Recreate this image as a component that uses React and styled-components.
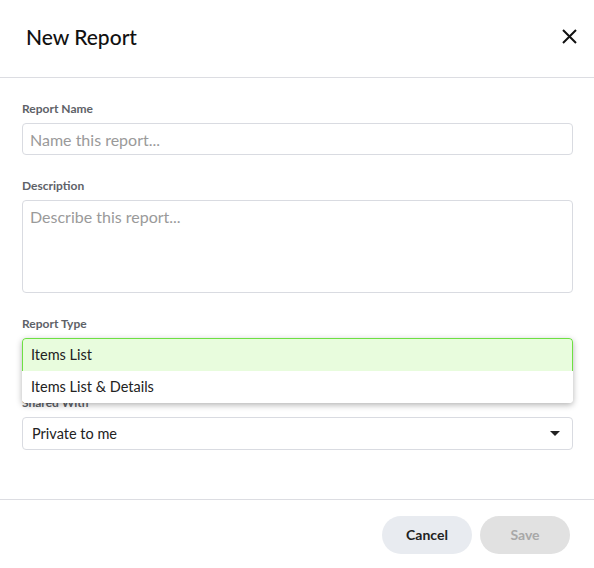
import React from 'react';
import styled, { createGlobalStyle } from 'styled-components';

const GlobalStyle = createGlobalStyle`
  html, body {
    margin: 0;
    padding: 0;
    background: #ffffff;
  }
  body {
    font-family: Lato, "Noto Sans", sans-serif;
    color: #1a1a1a;
  }
  * {
    box-sizing: border-box;
  }
`;

const Modal = styled.div`
  width: 594px;
  height: 568px;
  background: #fff;
  display: flex;
  flex-direction: column;
`;

const Header = styled.div`
  height: 78px;
  display: flex;
  align-items: center;
  justify-content: space-between;
  padding: 0 17px 4px 26px;
  border-bottom: 1px solid #dcdde2;
`;

const Title = styled.h2`
  margin: 0;
  font-size: 21px;
  font-weight: 500;
  color: #111;
`;

const CloseButton = styled.button`
  background: none;
  border: none;
  padding: 0;
  width: 15px;
  height: 15px;
  display: flex;
  align-items: center;
  justify-content: center;
  cursor: pointer;
  color: #111;
`;

const Body = styled.div`
  flex: 1;
  display: flex;
  flex-direction: column;
  padding: 23px 21px 0 22px;
  border-bottom: 1px solid #dcdde2;
`;

const Field = styled.div`
  display: flex;
  flex-direction: column;
  margin-bottom: ${props => props.gap || 23}px;
`;

const Label = styled.label`
  font-size: 12px;
  font-weight: 700;
  color: #5e6268;
  margin-bottom: 7px;
  line-height: 15px;
`;

const TextInput = styled.input`
  height: 32px;
  border: 1px solid #d9dbe1;
  border-radius: 4px;
  padding: 0 7px;
  font-family: inherit;
  font-size: 16px;
  color: #222;
  outline: none;

  &::placeholder {
    color: #9a9a9a;
  }
`;

const TextArea = styled.textarea`
  height: 93px;
  border: 1px solid #d9dbe1;
  border-radius: 4px;
  padding: 6px 7px;
  font-family: inherit;
  font-size: 16px;
  resize: none;
  outline: none;

  &::placeholder {
    color: #9a9a9a;
  }
`;

const SelectWrap = styled.div`
  position: relative;
`;

const SelectControl = styled.div`
  height: 33px;
  border: 1px solid #d9dbe1;
  border-radius: 4px;
  padding: 0 9px 1px;
  display: flex;
  align-items: center;
  justify-content: space-between;
  font-size: 14.5px;
  color: #222;
`;

const Caret = styled.span`
  width: 0;
  height: 0;
  border-left: 5px solid transparent;
  border-right: 5px solid transparent;
  border-top: 5px solid #222;
  margin-right: 3px;
`;

const Menu = styled.div`
  position: absolute;
  top: 0;
  left: 0;
  right: 0;
  background: #fff;
  border-radius: 4px;
  box-shadow: 0 2px 6px rgba(0, 0, 0, 0.3);
  z-index: 10;
  overflow: hidden;
`;

const Option = styled.div`
  height: ${props => (props.active ? 33 : 32)}px;
  display: flex;
  align-items: center;
  padding: 0 9px 2px;
  font-size: 14.5px;
  color: #222;
  background: ${props => (props.active ? '#e8fcdd' : '#fff')};
  border: ${props => (props.active ? '1px solid #6ee043' : 'none')};
  border-bottom: none;
  border-radius: ${props => (props.active ? '4px 4px 0 0' : '0')};
  padding-left: ${props => (props.active ? 8 : 9)}px;
`;

const Footer = styled.div`
  display: flex;
  justify-content: flex-end;
  align-items: center;
  gap: 8px;
  padding: 16px 24px 14px;
`;

const Button = styled.button`
  width: 90px;
  height: 38px;
  border: none;
  border-radius: 19px;
  font-family: inherit;
  font-size: 14px;
  font-weight: 700;
  padding: 0 0 2px;
  background: ${props => (props.primary ? '#e1e1e1' : '#e8ebf0')};
  color: ${props => (props.primary ? '#a8a8a8' : '#222')};
  cursor: ${props => (props.disabled ? 'default' : 'pointer')};
`;

const CloseIcon = () => (
  <svg width="15" height="15" viewBox="0 0 15 15" fill="none">
    <path d="M1 1L14 14M14 1L1 14" stroke="currentColor" strokeWidth="2" />
  </svg>
);

export default function App() {
  return (
    <>
      <GlobalStyle />
      <Modal>
        <Header>
          <Title>New Report</Title>
          <CloseButton aria-label="Close">
            <CloseIcon />
          </CloseButton>
        </Header>
        <Body>
          <Field>
            <Label>Report Name</Label>
            <TextInput placeholder="Name this report..." />
          </Field>
          <Field>
            <Label>Description</Label>
            <TextArea placeholder="Describe this report..." />
          </Field>
          <Field gap={24}>
            <Label>Report Type</Label>
            <SelectWrap>
              <SelectControl>
                Items List
                <Caret />
              </SelectControl>
              <Menu>
                <Option active>Items List</Option>
                <Option>Items List &amp; Details</Option>
              </Menu>
            </SelectWrap>
          </Field>
          <Field>
            <Label>Shared With</Label>
            <SelectControl>
              Private to me
              <Caret />
            </SelectControl>
          </Field>
        </Body>
        <Footer>
          <Button>Cancel</Button>
          <Button primary disabled>Save</Button>
        </Footer>
      </Modal>
    </>
  );
}
